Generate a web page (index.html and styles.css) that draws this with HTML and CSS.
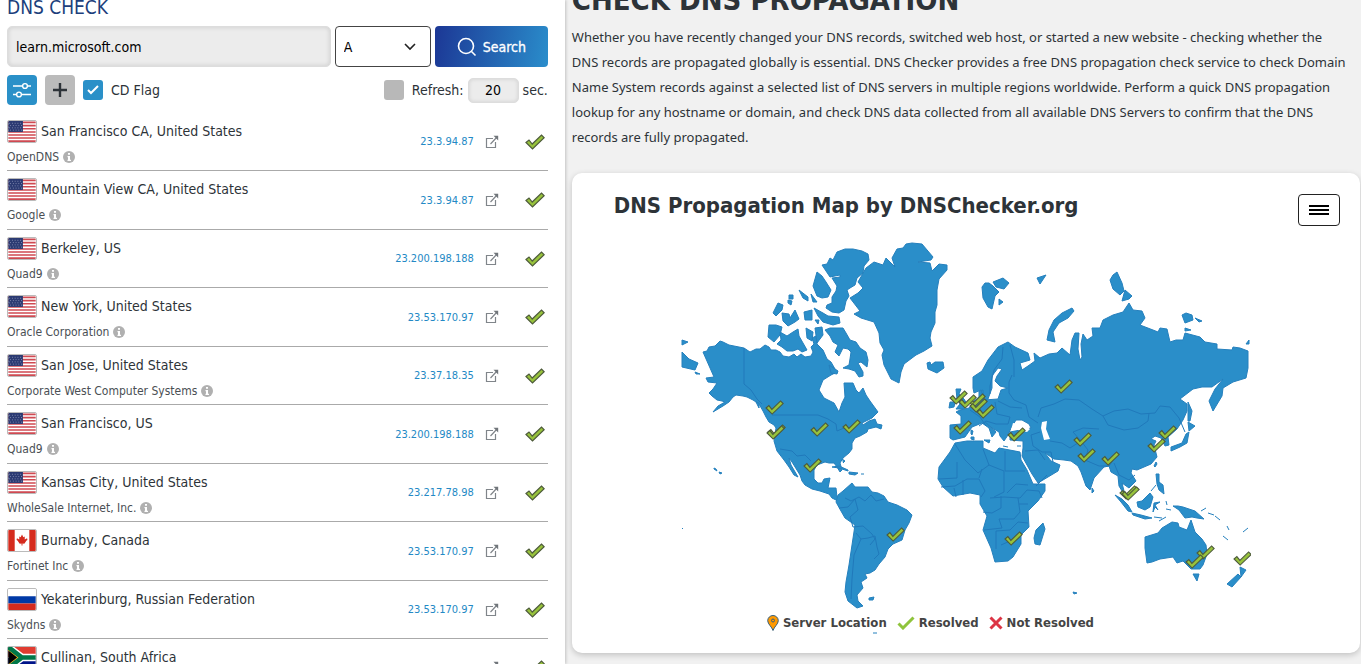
FILE: index.html
```html
<!DOCTYPE html>
<html lang="en">

<head>
    <meta charset="UTF-8">
    <meta name="viewport" content="width=device-width, initial-scale=1.0">
    <title>DNS Checker - DNS Check Propagation Tool</title>
    <link rel="stylesheet" href="styles.css">
</head>

<body>

    <!-- Shared icons -->
    <svg class="sprite" aria-hidden="true">
        <symbol id="tick" viewBox="0 0 20 16"><path d="M1 8.500 4 6l3.200 4L16.500 1 19.200 3.800 7.500 15z" fill="#97c23c" stroke="#4d5a3b" stroke-width="1.200"/></symbol>
        <symbol id="info" viewBox="0 0 12 12"><circle cx="6" cy="6" r="6" fill="#b0b0b0"/><path d="M5 2h2v1.700H5zM4.500 5H7v3.700h1V10H4.500V8.700H5V6.200h-.5z" fill="#fff"/></symbol>
        <symbol id="open" viewBox="0 0 14 14"><path d="M8 3.500H1.500v9h9V7M5.500 9 12 2" fill="none" stroke="#80858a" stroke-width="1.200"/><path d="M8.500.8h4.700v4.700z" fill="#70757a"/></symbol>
        <symbol id="us" viewBox="0 0 30 23"><rect width="30" height="23" fill="#fff"/><path d="M0 1.500h30M0 5h30M0 8.500h30M0 12h30M0 15.300h30M0 18.600h30M0 22h30" stroke="#cf4a52" stroke-width="1.800"/><rect width="16" height="12" fill="#2b3a72"/><path d="M1 2.500h15M2 5h14M1 7.500h15M2 10h14" stroke="#8b93b8" stroke-dasharray="1 2"/></symbol>
        <symbol id="ca" viewBox="0 0 30 23"><rect width="30" height="23" fill="#fff"/><path d="M0 0h7v23H0zM23 0h7v23h-7z" fill="#d52b1e"/><path d="M15 5l1.500 3 1.500-1v3.500l2.500-1.500.5 2-1 .5L17.500 15l-2-.2V17h-1v-2.200l-2 .2L10 11.500 9 11l.5-2 2.500 1.500V7l1.500 1z" fill="#d52b1e"/></symbol>
        <symbol id="ru" viewBox="0 0 30 23"><rect width="30" height="23" fill="#fff"/><path d="M0 8h30v8H0z" fill="#0039a6"/><path d="M0 16h30v7H0z" fill="#d52b1e"/></symbol>
        <symbol id="za" viewBox="0 0 30 23"><path d="M0 0h30v11H0z" fill="#e03c31"/><path d="M0 12h30v11H0z" fill="#001489"/><path d="M0 0l15 11.500H30M0 23l15-11.500" fill="none" stroke="#fff" stroke-width="8"/><path d="M0 0v23l14-11.500z" fill="#000"/><path d="M0 2l12 9.500L0 21" fill="none" stroke="#ffb81c" stroke-width="3"/><path d="M0 0l15 11.500H30M0 23l15-11.500" fill="none" stroke="#007749" stroke-width="5"/></symbol>
    </svg>

    <div class="page">

        <section class="checker">
            <h2>DNS CHECK</h2>

            <form>
                <div class="search-row">
                    <input type="text" class="domain" value="learn.microsoft.com" aria-label="Domain name">
                    <select aria-label="Record type">
                        <option>A</option>
                        <option>AAAA</option>
                        <option>CNAME</option>
                        <option>MX</option>
                        <option>NS</option>
                        <option>TXT</option>
                    </select>
                    <button type="button" class="search-btn">
                        <svg width="20" height="20" viewBox="0 0 20 20" fill="none" stroke="#fff" stroke-width="1.600"><circle cx="9" cy="9" r="7.500"/><path d="M14.500 14.500 18.500 18.500"/></svg>
                        Search
                    </button>
                </div>

                <div class="option-row">
                    <button type="button" class="icon-btn blue" aria-label="Settings">
                        <svg width="20" height="18" viewBox="0 0 20 18" fill="none" stroke="#fff" stroke-width="1.400"><path d="M1 5h9M16 5h3M1 13.500h3M10 13.500h9"/><circle cx="13" cy="5" r="2.400"/><circle cx="7" cy="13.500" r="2.400"/></svg>
                    </button>
                    <button type="button" class="icon-btn grey" aria-label="Add server">
                        <svg width="14" height="14" viewBox="0 0 14 14" stroke="#2d3338" stroke-width="2.400"><path d="M7 0v14M0 7h14"/></svg>
                    </button>
                    <input type="checkbox" id="cd-flag" checked>
                    <label for="cd-flag">CD Flag</label>
                    <span class="refresh">
                        <input type="checkbox" id="refresh">
                        <label for="refresh">Refresh:</label>
                        <input type="text" class="seconds" value="20" aria-label="Refresh seconds">
                        <span>sec.</span>
                    </span>
                </div>
            </form>

            <ul class="servers">
                <li>
                    <div class="server">
                        <div class="place"><svg class="flag"><use href="#us"/></svg>San Francisco CA, United States</div>
                        <div class="provider">OpenDNS <svg class="info"><use href="#info"/></svg></div>
                    </div>
                    <a href="#" class="ip">23.3.94.87</a>
                    <svg class="open"><use href="#open"/></svg>
                    <svg class="tick"><use href="#tick"/></svg>
                </li>
                <li>
                    <div class="server">
                        <div class="place"><svg class="flag"><use href="#us"/></svg>Mountain View CA, United States</div>
                        <div class="provider">Google <svg class="info"><use href="#info"/></svg></div>
                    </div>
                    <a href="#" class="ip">23.3.94.87</a>
                    <svg class="open"><use href="#open"/></svg>
                    <svg class="tick"><use href="#tick"/></svg>
                </li>
                <li>
                    <div class="server">
                        <div class="place"><svg class="flag"><use href="#us"/></svg>Berkeley, US</div>
                        <div class="provider">Quad9 <svg class="info"><use href="#info"/></svg></div>
                    </div>
                    <a href="#" class="ip">23.200.198.188</a>
                    <svg class="open"><use href="#open"/></svg>
                    <svg class="tick"><use href="#tick"/></svg>
                </li>
                <li>
                    <div class="server">
                        <div class="place"><svg class="flag"><use href="#us"/></svg>New York, United States</div>
                        <div class="provider">Oracle Corporation <svg class="info"><use href="#info"/></svg></div>
                    </div>
                    <a href="#" class="ip">23.53.170.97</a>
                    <svg class="open"><use href="#open"/></svg>
                    <svg class="tick"><use href="#tick"/></svg>
                </li>
                <li>
                    <div class="server">
                        <div class="place"><svg class="flag"><use href="#us"/></svg>San Jose, United States</div>
                        <div class="provider">Corporate West Computer Systems <svg class="info"><use href="#info"/></svg></div>
                    </div>
                    <a href="#" class="ip">23.37.18.35</a>
                    <svg class="open"><use href="#open"/></svg>
                    <svg class="tick"><use href="#tick"/></svg>
                </li>
                <li>
                    <div class="server">
                        <div class="place"><svg class="flag"><use href="#us"/></svg>San Francisco, US</div>
                        <div class="provider">Quad9 <svg class="info"><use href="#info"/></svg></div>
                    </div>
                    <a href="#" class="ip">23.200.198.188</a>
                    <svg class="open"><use href="#open"/></svg>
                    <svg class="tick"><use href="#tick"/></svg>
                </li>
                <li>
                    <div class="server">
                        <div class="place"><svg class="flag"><use href="#us"/></svg>Kansas City, United States</div>
                        <div class="provider">WholeSale Internet, Inc. <svg class="info"><use href="#info"/></svg></div>
                    </div>
                    <a href="#" class="ip">23.217.78.98</a>
                    <svg class="open"><use href="#open"/></svg>
                    <svg class="tick"><use href="#tick"/></svg>
                </li>
                <li>
                    <div class="server">
                        <div class="place"><svg class="flag"><use href="#ca"/></svg>Burnaby, Canada</div>
                        <div class="provider">Fortinet Inc <svg class="info"><use href="#info"/></svg></div>
                    </div>
                    <a href="#" class="ip">23.53.170.97</a>
                    <svg class="open"><use href="#open"/></svg>
                    <svg class="tick"><use href="#tick"/></svg>
                </li>
                <li>
                    <div class="server">
                        <div class="place"><svg class="flag"><use href="#ru"/></svg>Yekaterinburg, Russian Federation</div>
                        <div class="provider">Skydns <svg class="info"><use href="#info"/></svg></div>
                    </div>
                    <a href="#" class="ip">23.53.170.97</a>
                    <svg class="open"><use href="#open"/></svg>
                    <svg class="tick"><use href="#tick"/></svg>
                </li>
                <li>
                    <div class="server">
                        <div class="place"><svg class="flag"><use href="#za"/></svg>Cullinan, South Africa</div>
                    </div>
                    <svg class="open"><use href="#open"/></svg>
                    <svg class="tick"><use href="#tick"/></svg>
                </li>
            </ul>
        </section>

        <main>
            <h1>CHECK DNS PROPAGATION</h1>
            <p>
                Whether you have recently changed your DNS records, switched web host, or started a new website - checking whether the<br>
                DNS records are propagated globally is essential. DNS Checker provides a free DNS propagation check service to check Domain<br>
                Name System records against a selected list of DNS servers in multiple regions worldwide. Perform a quick DNS propagation<br>
                lookup for any hostname or domain, and check DNS data collected from all available DNS Servers to confirm that the DNS<br>
                records are fully propagated.
            </p>

            <div class="map-card">
                <div class="map-head">
                    <h3>DNS Propagation Map by DNSChecker.org</h3>
                    <button type="button" class="menu-btn" aria-label="Menu">
                        <svg width="20" height="11" viewBox="0 0 20 11" stroke="#000" stroke-width="2"><path d="M0 1h20M0 5h20M0 9h20"/></svg>
                    </button>
                </div>

                <div class="map">
                    <svg class="world" viewBox="681 240 570 396" role="img" aria-label="World map of DNS servers">
                        <g class="land">
                            <!-- North America -->
                            <path d="M703 352l4-1 2-4 6-1 5-5 3 1 6 3 15 3 6 4 6-3 4 0 5-4 4 2 2 3 5 0 4 2 3 4 6 1 5-3 3 3 4-3 4 3 6-1 2-4-2-5 3-3-2-6 4-2 1 8 6 6 4 9 4 3 4 7 0 4-4 2-8 5-4 10 5 8 10 5 5 9 3-9 3-6-1-14 9 0 3 7 3 3 4-5 3 7 4 6 8 11-6 6-10 5 1 2 6-4 6-2 2 5 5 1-1 4-5-2-8 2-1 3-7 4-5 2-3 5 0 6-3 4-6 5-3 5 2 7-2 2-3-5-3-4-5 0-4-1-8 3-3 5 0 9 4 4 4 0 2-4 6-1-1 5-1 5 8 0 1 9 3 3 6 1-1 3-5-2-8-4-3-4-9-3-8-2-7-4-3-4-2-6-8-13-3-4 2 7 7 12-4-2-5-8-5-7-7-9-3-10 2-13-2-3-5-3-3-5-3-6-4-7-6-4-6-3-4-1-7-1-3 2-4 5-6 4-10 6 5-6 7-4-3-1-5-1-5-4-3-3 4-4 4-6-9-1-2-4 8-1z"/>
                            <path d="M825 330l5-2 7 0 6 0 3 5 4 7 6 2 4 6 6 4 2 8-1 7-6-5-3 1 5 9 0 4-4 1-4-6-6-2-6-1 6-3 1-6 1-7-3-3-5-1-4 8-4-4 3-7-5-3-3-6z"/>
                            <path d="M829 365l9 6-1 3-6-1zM769 325l7 0 6 2-2 8-6 7-6-5zM780 332l7 4 6-4 5-3 1 7 4 7 4 7-5 2-4-3-5 2-6 0-5-4-5-3 4-4zM806 328l7 4-1 9-5-3zM815 328l7-1 1 8-6 8z"/>
                            <path d="M822 265l5-1 3-6 3 2 4-8 8-3 8 0 9 2 6 3 1 6-5 6-1 7-6 5-2 7-5 3-3 2 2 6-3 5-2 9-5 3-7-1-6-4 1-3 5-2 0-6 4-6 1-5-5-8 8-1 0-2-10 2zM817 272l5 4 4 6 5 8-3 7-6 1-5-2-4-10z"/>
                            <path d="M778 303l5 2-1 5-6 6-3-3zM782 313l7 1 1 4 5-8 4 9-4 3-7 4-5-5zM799 290l9 7 0 4-5-3zM811 294l6 8-4 0zM789 295l4 0 0 4-4 0zM788 300l4 1-1 4-3-2zM804 312l8-2 0 10-7 0zM814 308l9 5 5 3 11 1 1 6-7 2-10-3-5-6zM815 320l4 0-1 4z"/>
                            <path d="M682 352l7 7 9 4-3 7-13-3zM682 340l6 2-6 3zM695 372l5 2-4 0zM756 402l3 1 0 5zM714 468l2 1 1 2-3-2zM719 472l3 1-2 1zM832 467l7-1 9 4 0 1-9-3zM849 472l9 1-3 2-6-1zM861 474l3 0M842 459l3 2-2 2"/>
                            <!-- Greenland, Iceland -->
                            <path d="M850 298l8-5 5-5-5-6 8-14 8-6 9 3 3-7 9 9-3-9 5-9 6-1 3-4 6-1 10 1 11 13-2 3-13 2 12 1 2 8 7-7 8 1 0 5-8 9-2 11 0 15-2 7 0 11-4 9-1 6 2 8-8 5-8 4-12 9-3 8-2 11-8-4-7-14-2-10 2-5-4-7-1-10-5-11-13-4-7-4 6-3zM927 363l3-1 1 3 4-3 8 0 1 6-7 5-9-4z"/>
                            <!-- South America -->
                            <path d="M843 491l9-8 3 4 8 0 5 0 4 5 6 1 6 3 4 6 9 3 10 5 5 5-3 8-4 7-3 10-9 4-5 5-3 8-6 7-4 6-5 3-5 1 2 4-6 4 2 6-6 7 1 6 5 5-6 2-9-7-3-9 1-10 3-17 3-20 3-20-10-7-4-7-5-9 2-7z"/>
                            <path d="M869 598l5-1-1 3-4 0zM873 633l4 0M682 528l1 1M1073 592l4 1-3 1z"/>
                            <!-- Europe and Asia -->
                            <path d="M973 388l0-11 9-6 6-11 10-13 10-5 7 5 13 6 2 7-10 3 2 7 6-4 7-5-1-8 6 5 9-4 8-1 5-5 8 7 2-15 3-7 4 0-1 16 2 11 2-3-1-13 2-10 4 6 6-4-1-8 8 0 3-8 10-5 10-3 6-9 4 7 9 1 3 7-5 7 13 5 5 2 2-4 7 1 3 13 6-2 7 0 2-7 15 4 5 5 12 2 0 5 15 1 1-3 7 1 8 3 0 17-2 10-13 4-10 6-1 8-9 15-4-10 6-12 8-10-11 8-10 0-9 2-13 10 7 5 0 7-4 9-6 9-9 8 1 8-4 1-4-8-6-2-4 3 5 2-2 4 3 12-6 7-14 6-5-1-1 4 5 8-7 7-7-5 2 8 4 6-3-1-6-10-1-10-7-4-2-6-5 1-10 11-4 12-4-4-5-14-3-6-7-5-7-1-10-1-9-6 6 8 9 4-2 6-20 12-6-9-10-18 1-8 0-7-13-1 0-8 21-4-2-4-7-4-6 0-5 8-3 7-4 6-4-5-1-4-7-4-7-6 11 10-4 5-3-9-7-5-10 4-7 10-12 3-3-2 0-13 11-1 0-8-5-4 4-2 9-2 5-7 5-4 0-6 4-1 1 10 14-1 3-9 7-2-8-2-5-5 2-5 5-7-4-1-6 8 0 12-4 11-4 1-3-10-7 3z"/>
                            <path d="M956 389l5 0-2 5 5 5 3 5-3 5-8 0 4-5-3-5zM950 402l5 0-1 5-5 1zM971 437l3 0 0 3-3-1zM971 430l2 1-1 4-1-1zM984 440l6 0-1 3zM1003 446l5 1M1017 446l4 0"/>
                            <path d="M982 287l3-4 4 0 4 3 6 6-4 4-3 13-4-2-5-9zM993 282l10-4 6 5-5 6-8-2zM999 299l4 3-4 3zM1037 278l9-3-6 9zM1047 340l2-10 5-10 8-7 10-5 2 3-6 7-9 5-6 9 2 10zM1110 280l3-5 4-3 5 11 2 8-4 4-7-6zM1125 290l7 6-3 3-7 2zM1182 315l4-2 6 2 1 5-8 3zM1195 318l7 3-3 1zM1185 328l6 2-6 1zM1249 340l0 4-3 0z"/>
                            <path d="M1188 402l4 9-2 10-2 0zM1188 422l7 4-6 5zM1189 432l-2 11-7 4-9 4 0-4 11-4 4-9zM1156 462l1 2-2 3-1-1zM1156 474l3 0 0 8 4 3 1 9-5-4-2-6zM1151 491l5-6M1092 488l2 3-2 2z"/>
                            <path d="M1115 495l7 4 6 6 4 7-4-1-7-9zM1132 513l9 2 11 3-7 1-12-4zM1154 517l8 1M1159 521l7-4M1137 502l5-1 8-8 3 4-3 10-5 3-7-3zM1154 503l6-1-5 3 3 5-3-3-2 5zM1166 501l1 4M1166 509l5 1M1173 506l5 0 5 1 12 4 9 8-7-1-5-1-7 1-6-8zM1201 511l5-3M1208 513l6 2M1215 516l5 4M1223 536l5 4M1227 526l2 4M1243 532l5-4"/>
                            <!-- Africa, Madagascar -->
                            <path d="M955 443l12-2 16 0 0 7 12 5 4-5 21 4 1 8 6 10 6 14 12 0 0 7-7 10-10 10 1 16-8 8 0 9-8 13-5 4-13 1-4-14-8-18 4-14-7-12 0-9-10-2-17 3-10-9-5-8 1-12 11-15zM1043 523l2 6-5 16-5-1-1-6 2-8z"/>
                            <!-- Australia, New Zealand -->
                            <path d="M1145 537l13-4 4-5 10-6 6 1 1 4 8 3 4-10 4 12 7 7 4 6 1 9-4 11-3 4-9 0-8-8-6 2-4-6-13 2-8 3-5 1-2-15zM1193 574l6 0-2 7zM1240 567l6 3-5 7zM1238 574l3 3-9 10-5-3z"/>
                        </g>
                        <!-- Inland seas -->
                        <path d="M1011 430l2-7 5 1 2 2 6 0 4 3-3 3-9-2zM1042 422l5-1-1 8 4 10-6 1-3-12z" fill="#fff"/>
                        <!-- Country borders -->
                        <g class="borders">
                            <path d="M744 348v36l7 6 6 9 5 5M772 415h46l10 4 8 5 1 7 7-3M780 449l12 2 5 5 8-1 6 6M845 498l6 3 8-4 6 4 6-6 5 6 8-2M839 508l9-1 7-8 3 11-8 7 3 10 10-1 9 8 3 5-5 6M856 533l5 6 7-1 7-2 2 11 2 7-5 5M861 539l-7 16-2 24-1 20M1003 347l-1 12-8 11-4 16 0 8M1010 345l4 15 0 17"/>
                            <path d="M1012 375l-3 7 0 11 5 7 12 5 3 12 9 6M998 401l12 6 12 1M995 402l2 12 13 3-2 7-12 0-10-3-7 5M970 410l10 7 6 9M1038 417l3-9 13-4 11-5 14 1 13 9 11 7 11-5 14-2 13 5 14-1 5-7 10 1 9 11 6 14M1103 416l5 9 16 5 14-2 10-7 1-8M1040 432l-9 3 2 11 9 6 9 0 2 10M1050 441l12 2 8 5 11-7-8-9 10-4 16 1M1081 441l7 9-3 10 14 6 10 0 6-8M1114 463l5 12 10 5 6-5M1036 486l11-11M1025 451l13-1 7 10"/>
                            <path d="M957 462v16l-18 1M955 444l10 16 13 13 11-8-6-16M1005 451v20l20 0M989 465l15 6 0 21-10 5M941 487l14-1 12-7 12 0 6 12-4 6M963 480l0 15M954 488l2 9M979 478l3-9M990 498l14-1 16 1 7-8 12 1 3 7M983 512l9 1 9-5 0-12M984 530l18-2-3-9 15 0 6-7-2-14M996 549v-18l14-1 8-8 10 1M1001 545l9-4 11-7M1007 493l9-9 12 1M1019 504l9 0"/>
                        </g>
                        <!-- Server markers -->
                        <g class="markers">
                            <use href="#tick" width="19" height="15" x="765" y="400"/>
                            <use href="#tick" width="19" height="15" x="767" y="424"/>
                            <use href="#tick" width="19" height="15" x="766" y="425"/>
                            <use href="#tick" width="19" height="15" x="810" y="422"/>
                            <use href="#tick" width="19" height="15" x="842" y="419"/>
                            <use href="#tick" width="19" height="15" x="803" y="458"/>
                            <use href="#tick" width="19" height="15" x="886" y="527"/>
                            <use href="#tick" width="19" height="15" x="949" y="390"/>
                            <use href="#tick" width="19" height="15" x="967" y="393"/>
                            <use href="#tick" width="19" height="15" x="958" y="394"/>
                            <use href="#tick" width="19" height="15" x="969" y="398"/>
                            <use href="#tick" width="19" height="15" x="976" y="404"/>
                            <use href="#tick" width="19" height="15" x="953" y="420"/>
                            <use href="#tick" width="19" height="15" x="1007" y="427"/>
                            <use href="#tick" width="19" height="15" x="1054" y="379"/>
                            <use href="#tick" width="19" height="15" x="1073" y="432"/>
                            <use href="#tick" width="19" height="15" x="1077" y="448"/>
                            <use href="#tick" width="19" height="15" x="1101" y="451"/>
                            <use href="#tick" width="19" height="15" x="1119" y="485"/>
                            <use href="#tick" width="19" height="15" x="1121" y="486"/>
                            <use href="#tick" width="19" height="15" x="1158" y="425"/>
                            <use href="#tick" width="19" height="15" x="1147" y="438"/>
                            <use href="#tick" width="19" height="15" x="1196" y="545"/>
                            <use href="#tick" width="19" height="15" x="1185" y="554"/>
                            <use href="#tick" width="19" height="15" x="1233" y="551"/>
                            <use href="#tick" width="19" height="15" x="1004" y="531"/>
                        </g>
                    </svg>

                    <div class="legend">
                        <span><svg width="12" height="16" viewBox="0 0 12 16"><path d="M6 15.500C5 12 .7 9 .7 5.700a5.300 5.200 0 0 1 10.600 0C11.300 9 7 12 6 15.500z" fill="#f90" stroke="#35607f"/><circle cx="6" cy="5.500" r="1.500" fill="#f90" stroke="#35607f"/></svg>Server Location</span>
                        <span><svg width="18" height="14" viewBox="0 0 18 14"><path d="M1.500 7.500 6 12 16.500 1.500" fill="none" stroke="#8fc43c" stroke-width="3"/></svg>Resolved</span>
                        <span><svg width="14" height="14" viewBox="0 0 14 14"><path d="M1.500 1.500l11 11M12.500 1.500l-11 11" stroke="#dc3545" stroke-width="3"/></svg>Not Resolved</span>
                    </div>
                </div>
            </div>
        </main>

    </div>

</body>

</html>
```
FILE: styles.css
```css
* {
    box-sizing: border-box;
}

body {
    margin: 0;
    height: 100vh;
    overflow: hidden;
    font-family: Tahoma, "DejaVu Sans Condensed", sans-serif;
    font-size: 14px;
    color: #2d3338;
    background-color: #f1f1f1;
}

h1, h2, h3, p, ul {
    margin: 0;
    padding: 0;
}

input, select, button {
    font-family: inherit;
    font-size: 14px;
    margin: 0;
}

.sprite {
    position: absolute;
    width: 0;
    height: 0;
}

.page {
    display: grid;
    grid-template-columns: 83fr 117fr;
    height: 100%;
}

/* Left panel */
.checker {
    background-color: #fff;
    padding: 0 17px 0 7px;
    box-shadow: 1px 0 3px rgba(0, 0, 0, 0.2);
    overflow: hidden;
}

h2 {
    margin-top: -7px;
    font-size: 19px;
    font-weight: normal;
    line-height: 28px;
    color: #1d3f7c;
}

.search-row {
    display: flex;
    gap: 4px;
    height: 41px;
    margin-top: 5px;
}

.domain {
    flex: 1;
    min-width: 0;
    padding: 0 8px;
    border: 1px solid #ddd;
    border-radius: 5px;
    background-color: #ececec;
    box-shadow: inset 0 0 5px rgba(0, 0, 0, 0.15);
    color: #000;
}

select {
    width: 96px;
    padding: 0 8px;
    border: 1px solid #444;
    border-radius: 4px;
    appearance: none;
    background: #fff url("data:image/svg+xml,%3Csvg xmlns='http://www.w3.org/2000/svg' width='12' height='8'%3E%3Cpath d='M1 1l5 5 5-5' fill='none' stroke='%23222' stroke-width='1.600'/%3E%3C/svg%3E") no-repeat right 14px center;
    color: #000;
}

.search-btn {
    display: flex;
    align-items: center;
    justify-content: center;
    gap: 6px;
    width: 113px;
    border: 0;
    border-radius: 4px;
    background: linear-gradient(100deg, #1c3795, #2a8dcb);
    color: #fff;
    -webkit-text-stroke: 0.3px #fff;
}

.option-row {
    display: flex;
    align-items: center;
    gap: 8px;
    height: 30px;
    margin-top: 8px;
}

.icon-btn {
    display: flex;
    align-items: center;
    justify-content: center;
    width: 30px;
    height: 30px;
    padding: 0;
    border: 0;
    border-radius: 4px;
}

.blue {
    background-color: #2a90c8;
}

.grey {
    background-color: #bbb;
}

input[type="checkbox"] {
    appearance: none;
    width: 20px;
    height: 20px;
    border-radius: 3px;
    background-color: #b8b8b8;
}

input[type="checkbox"]:checked {
    background: #2a90c8 url("data:image/svg+xml,%3Csvg xmlns='http://www.w3.org/2000/svg' width='12' height='10'%3E%3Cpath d='M1 5l3 3 7-7' fill='none' stroke='white' stroke-width='2'/%3E%3C/svg%3E") no-repeat center;
}

.refresh {
    display: flex;
    align-items: center;
    gap: 4px;
    margin-left: auto;
}

.refresh label {
    margin-left: 4px;
}

.seconds {
    width: 51px;
    height: 25px;
    padding: 0;
    border: 1px solid #ddd;
    border-radius: 5px;
    background-color: #ececec;
    box-shadow: inset 0 0 4px rgba(0, 0, 0, 0.12);
    text-align: center;
    color: #000;
}

.servers {
    margin-top: 8px;
    list-style: none;
}

.servers li {
    display: flex;
    align-items: center;
    height: 58px;
    border-bottom: 1px solid #aaa;
}

.servers li:nth-child(even) {
    height: 59px;
}

.server {
    flex: 1;
    height: 100%;
    padding-top: 6px;
}

.place {
    display: flex;
    align-items: center;
    gap: 4px;
    height: 24px;
    line-height: 20px;
}

.provider {
    display: flex;
    align-items: center;
    gap: 4px;
    height: 27px;
    font-size: 12px;
    color: #4a4f54;
}

.flag {
    width: 30px;
    height: 23px;
    border: 1px solid #bbb;
    border-radius: 2px;
}

.info {
    width: 12px;
    height: 12px;
}

.ip {
    font-size: 11px;
    color: #2389c5;
    text-decoration: none;
}

.open {
    width: 14px;
    height: 14px;
    margin: 0 26px 0 11px;
}

.tick {
    width: 20px;
    height: 16px;
    margin-right: 3px;
}

/* Right side */
main {
    padding-left: 7px;
}

h1 {
    margin-top: -20px;
    font-size: 29px;
    line-height: 40px;
}

main p {
    margin-top: 5px;
    font-family: "Noto Sans", sans-serif;
    font-size: 13px;
    line-height: 25px;
}

.map-card {
    height: 480px;
    margin-top: 23px;
    margin-right: 1px;
    border-radius: 10px;
    background-color: #fff;
    box-shadow: 0 2px 6px rgba(0, 0, 0, 0.2);
}

.map-head {
    display: flex;
    justify-content: space-between;
    padding: 21px 20px 0 42px;
}

h3 {
    font-size: 22px;
    line-height: 24px;
}

.menu-btn {
    display: flex;
    align-items: center;
    justify-content: center;
    width: 42px;
    height: 32px;
    border: 1px solid #222;
    border-radius: 4px;
    background-color: #fff;
}

.map {
    position: relative;
    width: 570px;
    max-width: 100%;
    margin: 14px auto 0;
}

.world {
    display: block;
    width: 100%;
}

.land {
    fill: #2a8ec9;
    stroke: #2580bd;
    stroke-linejoin: round;
}

.borders {
    fill: none;
    stroke: #2079bb;
    stroke-linejoin: round;
}

.legend {
    position: absolute;
    left: 86px;
    bottom: 4px;
    display: flex;
    gap: 10px;
    font-size: 13px;
    font-weight: bold;
    line-height: 18px;
    color: #444;
    white-space: nowrap;
}

.legend span {
    display: flex;
    align-items: center;
    gap: 4px;
}
```
